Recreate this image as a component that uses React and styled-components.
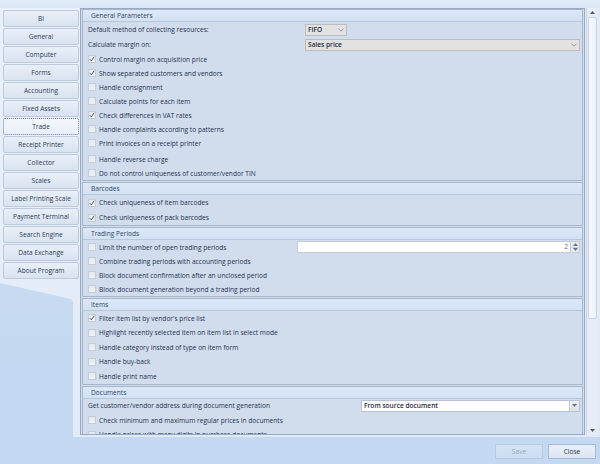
import React from "react"
import styled, { createGlobalStyle } from "styled-components"

const GlobalStyle = createGlobalStyle`
  html, body { margin: 0; padding: 0; }
  body {
    width: 600px;
    height: 464px;
    overflow: hidden;
    font-family: "Open Sans", "DejaVu Sans", sans-serif;
  }
`

const Window = styled.div`
  width: 600px;
  height: 464px;
  display: grid;
  grid-template-rows: 437px 27px;
  background: linear-gradient(to bottom, #e4edf9 0, #d9e6f6 8px, #c9dcf3 30%, #c4d8f1 100%);
  overflow: hidden;
`

const Main = styled.div`
  display: grid;
  grid-template-columns: 80px 1fr;
  padding-top: 8px;
`

const Nav = styled.nav`
  position: relative;
  display: flex;
  flex-direction: column;
  gap: 1px;
  padding: 2px 0 0 3px;

  &::before {
    content: "";
    position: absolute;
    inset: 0;
    background: linear-gradient(to bottom, #e9f0fa, #e2ebf8);
    clip-path: polygon(0 0, 100% 0, 100% 100%, 73px 100%, 73px 294px, 71px 291px, 0 275px);
    z-index: 0;
  }
`

const Tab = styled.div`
  position: relative;
  z-index: 1;
  width: 76px;
  height: 17px;
  box-sizing: border-box;
  display: flex;
  align-items: center;
  justify-content: center;
  font-size: 6.6px;
  color: #2b3d5c;
  border-radius: 2px;
  border: ${p => (p.$active ? "1px dotted #6d7f99" : "1px solid #bccbdd")};
  background: ${p =>
    p.$active
      ? "linear-gradient(to bottom, #f3f6fb, #e9eff8)"
      : "linear-gradient(to bottom, #e9eff8, #d9e3f0)"};
`

const Frame = styled.div`
  display: flex;
  background: #e1eaf6;
  padding: 0 2px 2px 0;
  min-height: 0;
`

const Panel = styled.div`
  flex: 1;
  min-width: 0;
  border: 1px solid #98aac1;
  background: #d1dded;
  padding: 0 1px;
  overflow: hidden;
  display: flex;
  flex-direction: column;
  gap: 1px;
`

const Group = styled.section`
  border: 1px solid #a5b7cd;
  border-top: none;
  display: flex;
  flex-direction: column;
  flex-shrink: 0;
`

const GroupHeader = styled.div`
  height: 11px;
  display: flex;
  align-items: center;
  padding-left: 8px;
  font-size: 6.6px;
  color: #33466a;
  background: linear-gradient(to bottom, #dce8f8, #d2e1f4);
  border-top: 1px solid #a5b7cd;
  border-bottom: 1px solid #b7c8de;
`

const GroupBody = styled.div`
  --rh: ${p => p.$rh || 14.5}px;
  display: flex;
  flex-direction: column;
`

const Row = styled.div`
  height: ${p => (p.$h ? p.$h + "px" : "var(--rh)")};
  margin-top: ${p => p.$mt || 0}px;
  display: flex;
  align-items: center;
  padding-left: 5px;
  padding-right: 2px;
  font-size: 6.6px;
  color: #1f3152;
  white-space: nowrap;
  flex-shrink: 0;
`

const Label = styled.span`
  flex: ${p => (p.$grow ? "0 0 " + p.$grow + "px" : "0 0 auto")};
`

const Box = styled.span`
  width: 8px;
  height: 8px;
  box-sizing: border-box;
  border: 1px solid #c3ccd8;
  background: linear-gradient(to bottom, #e4e9f0, #eff2f6);
  margin-right: 3px;
  display: inline-flex;
  align-items: center;
  justify-content: center;
  flex-shrink: 0;
`

const Select = styled.div`
  height: 12px;
  box-sizing: border-box;
  width: ${p => (p.$w ? p.$w + "px" : "auto")};
  flex: ${p => (p.$w ? "0 0 auto" : "1")};
  display: flex;
  align-items: center;
  justify-content: space-between;
  padding-left: 2px;
  font-size: 6.6px;
  font-weight: 600;
  color: #1d2a3f;
  border: 1px solid ${p => (p.$white ? "#b9c4d2" : "#bdbdbd")};
  background: ${p => (p.$white ? "#ffffff" : "#e2e2e2")};
`

const Chevron = styled.span`
  width: 10px;
  display: flex;
  align-items: center;
  justify-content: center;
`

const DropButton = styled.span`
  width: 9px;
  align-self: stretch;
  display: flex;
  align-items: center;
  justify-content: center;
  background: linear-gradient(to bottom, #eef0f3, #dde1e7);
  border-left: 1px solid #c6ccd6;
`

const Spin = styled.div`
  flex: 1;
  height: 12px;
  box-sizing: border-box;
  display: flex;
  align-items: stretch;
  border: 1px solid #c4ccd7;
  background: #fff;
  font-size: 6.6px;
  color: #6a6f78;
`

const SpinValue = styled.span`
  flex: 1;
  text-align: right;
  padding-right: 2px;
  line-height: 10px;
`

const SpinButtons = styled.span`
  width: 8px;
  display: flex;
  flex-direction: column;
  border-left: 1px solid #c9d0da;
  background: #e7eaef;
`

const SpinBtn = styled.span`
  flex: 1;
  display: flex;
  align-items: center;
  justify-content: center;
  &:first-child { border-bottom: 1px solid #cfd5de; }
`

const Scrollbar = styled.div`
  width: 11px;
  margin-left: 1px;
  display: flex;
  flex-direction: column;
  background: #e6edf7;
  border-left: 1px solid #c8d5e6;
`

const ScrollArrow = styled.div`
  height: 9px;
  display: flex;
  align-items: center;
  justify-content: center;
`

const Thumb = styled.div`
  height: ${p => p.$h}px;
  margin: 0 1px;
  background: linear-gradient(to right, #f6f9fd, #edf2f9);
  border: 1px solid #c5d3e5;
  border-radius: 1px;
`

const Track = styled.div`
  flex: 1;
`

const Footer = styled.div`
  display: flex;
  justify-content: flex-end;
  align-items: flex-start;
  gap: 5px;
  padding: 7px 4px 0 0;
`

const Button = styled.button`
  width: 48px;
  height: 15px;
  padding: 0;
  font-family: inherit;
  font-size: 6.6px;
  color: ${p => (p.disabled ? "#9aaac0" : "#2b3d5c")};
  border: 1px solid ${p => (p.disabled ? "#b9cbe3" : "#a7bbd6")};
  background: ${p =>
    p.disabled
      ? "linear-gradient(to bottom, #d4e2f4, #ccdcf1)"
      : "linear-gradient(to bottom, #eaf0f8, #dbe5f2)"};
`

const Check = () => (
  <svg width="6" height="6" viewBox="0 0 6 6">
    <path d="M0.8 3.2 L2.3 4.8 L5.2 0.8" fill="none" stroke="#3a4458" strokeWidth="0.9" />
  </svg>
)

const Down = ({ color = "#7d8796" }) => (
  <svg width="6" height="4" viewBox="0 0 6 4">
    <path d="M0.5 0.8 L3 3.2 L5.5 0.8" fill="none" stroke={color} strokeWidth="0.8" />
  </svg>
)

const Tri = ({ up, color = "#4d5a6e" }) => (
  <svg width="5" height="3" viewBox="0 0 5 3">
    <path d={up ? "M0 3 L2.5 0 L5 3 Z" : "M0 0 L2.5 3 L5 0 Z"} fill={color} />
  </svg>
)

const CheckRow = ({ checked, children, mt }) => (
  <Row $mt={mt}>
    <Box>{checked && <Check />}</Box>
    <Label>{children}</Label>
  </Row>
)

const tabs = [
  "BI", "General", "Computer", "Forms", "Accounting", "Fixed Assets", "Trade",
  "Receipt Printer", "Collector", "Scales", "Label Printing Scale",
  "Payment Terminal", "Search Engine", "Data Exchange", "About Program",
]

export default function App() {
  return (
    <>
      <GlobalStyle />
      <Window>
        <Main>
          <Nav>
            {tabs.map(t => (
              <Tab key={t} $active={t === "Trade"}>{t}</Tab>
            ))}
          </Nav>
          <Frame>
            <Panel>
              <Group>
                <GroupHeader>General Parameters</GroupHeader>
                <GroupBody $rh={14}>
                  <Row $h={15}>
                    <Label $grow={217}>Default method of collecting resources:</Label>
                    <Select $w={42}>FIFO<Chevron><Down /></Chevron></Select>
                  </Row>
                  <Row $h={15}>
                    <Label $grow={217}>Calculate margin on:</Label>
                    <Select>Sales price<Chevron><Down /></Chevron></Select>
                  </Row>
                  <CheckRow checked>Control margin on acquisition price</CheckRow>
                  <CheckRow checked>Show separated customers and vendors</CheckRow>
                  <CheckRow>Handle consignment</CheckRow>
                  <CheckRow>Calculate points for each item</CheckRow>
                  <CheckRow checked>Check differences in VAT rates</CheckRow>
                  <CheckRow>Handle complaints according to patterns</CheckRow>
                  <CheckRow>Print invoices on a receipt printer</CheckRow>
                  <CheckRow mt={2}>Handle reverse charge</CheckRow>
                  <CheckRow>Do not control uniqueness of customer/vendor TIN</CheckRow>
                </GroupBody>
              </Group>
              <Group>
                <GroupHeader>Barcodes</GroupHeader>
                <GroupBody $rh={15}>
                  <CheckRow checked>Check uniqueness of item barcodes</CheckRow>
                  <CheckRow checked>Check uniqueness of pack barcodes</CheckRow>
                </GroupBody>
              </Group>
              <Group>
                <GroupHeader>Trading Periods</GroupHeader>
                <GroupBody $rh={14}>
                  <Row>
                    <Box />
                    <Label $grow={198}>Limit the number of open trading periods</Label>
                    <Spin>
                      <SpinValue>2</SpinValue>
                      <SpinButtons>
                        <SpinBtn><Tri up color="#6c7584" /></SpinBtn>
                        <SpinBtn><Tri color="#6c7584" /></SpinBtn>
                      </SpinButtons>
                    </Spin>
                  </Row>
                  <CheckRow>Combine trading periods with accounting periods</CheckRow>
                  <CheckRow>Block document confirmation after an unclosed period</CheckRow>
                  <CheckRow>Block document generation beyond a trading period</CheckRow>
                </GroupBody>
              </Group>
              <Group>
                <GroupHeader>Items</GroupHeader>
                <GroupBody>
                  <CheckRow checked>Filter item list by vendor's price list</CheckRow>
                  <CheckRow>Highlight recently selected item on item list in select mode</CheckRow>
                  <CheckRow>Handle category instead of type on item form</CheckRow>
                  <CheckRow>Handle buy-back</CheckRow>
                  <CheckRow>Handle print name</CheckRow>
                </GroupBody>
              </Group>
              <Group>
                <GroupHeader>Documents</GroupHeader>
                <GroupBody>
                  <Row>
                    <Label $grow={273}>Get customer/vendor address during document generation</Label>
                    <Select $white>
                      From source document
                      <DropButton><Tri color="#6c7584" /></DropButton>
                    </Select>
                  </Row>
                  <CheckRow>Check minimum and maximum regular prices in documents</CheckRow>
                  <CheckRow>Handle prices with many digits in purchase documents</CheckRow>
                </GroupBody>
              </Group>
            </Panel>
            <Scrollbar>
              <ScrollArrow><Tri up /></ScrollArrow>
              <Thumb $h={300} />
              <Track />
              <ScrollArrow><Tri /></ScrollArrow>
            </Scrollbar>
          </Frame>
        </Main>
        <Footer>
          <Button disabled>Save</Button>
          <Button>Close</Button>
        </Footer>
      </Window>
    </>
  )
}
